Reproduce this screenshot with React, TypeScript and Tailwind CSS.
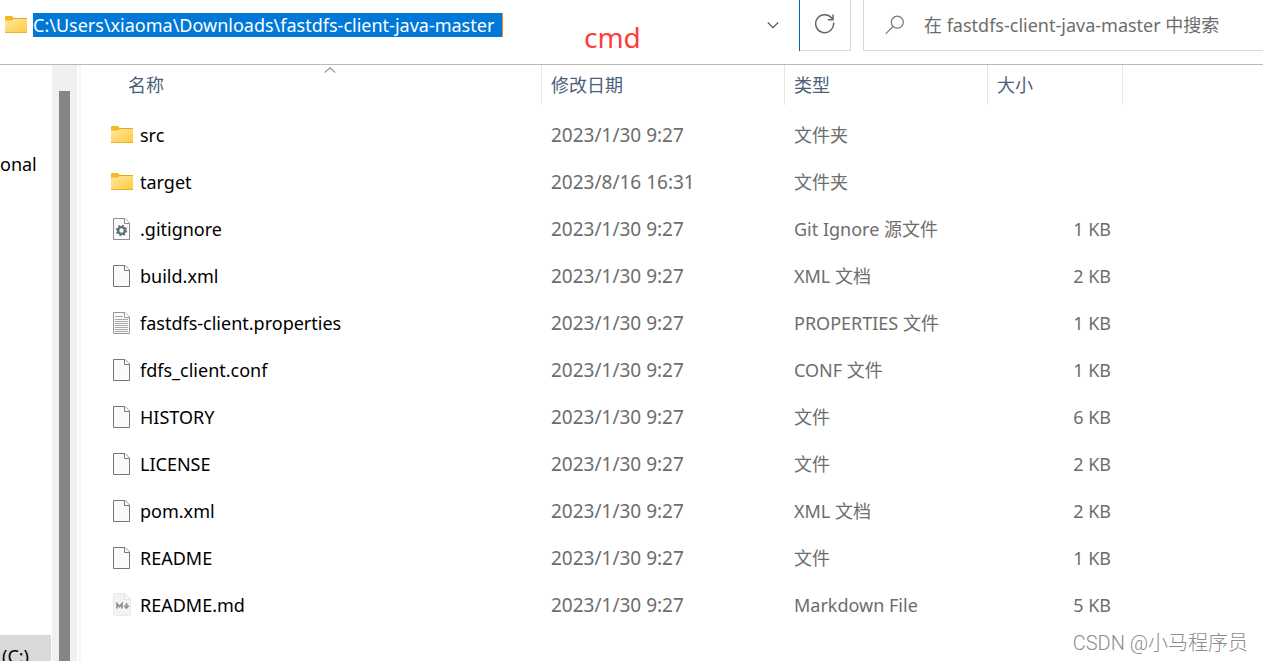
import { ReactNode } from 'react';

type IconKind = 'folder' | 'gear' | 'blank' | 'text' | 'markdown';

interface FileEntry {
    name: string;
    modified: string;
    type: string;
    size?: string;
    icon: IconKind;
}

const files: FileEntry[] = [
    { name: 'src', modified: '2023/1/30 9:27', type: '文件夹', icon: 'folder' },
    { name: 'target', modified: '2023/8/16 16:31', type: '文件夹', icon: 'folder' },
    { name: '.gitignore', modified: '2023/1/30 9:27', type: 'Git Ignore 源文件', size: '1 KB', icon: 'gear' },
    { name: 'build.xml', modified: '2023/1/30 9:27', type: 'XML 文档', size: '2 KB', icon: 'blank' },
    { name: 'fastdfs-client.properties', modified: '2023/1/30 9:27', type: 'PROPERTIES 文件', size: '1 KB', icon: 'text' },
    { name: 'fdfs_client.conf', modified: '2023/1/30 9:27', type: 'CONF 文件', size: '1 KB', icon: 'blank' },
    { name: 'HISTORY', modified: '2023/1/30 9:27', type: '文件', size: '6 KB', icon: 'blank' },
    { name: 'LICENSE', modified: '2023/1/30 9:27', type: '文件', size: '2 KB', icon: 'blank' },
    { name: 'pom.xml', modified: '2023/1/30 9:27', type: 'XML 文档', size: '2 KB', icon: 'blank' },
    { name: 'README', modified: '2023/1/30 9:27', type: '文件', size: '1 KB', icon: 'blank' },
    { name: 'README.md', modified: '2023/1/30 9:27', type: 'Markdown File', size: '5 KB', icon: 'markdown' },
];

function FolderIcon() {
    return (
        <svg className="h-[17px] w-[22px] shrink-0" viewBox="0 0 22 17" aria-hidden="true">
            <defs>
                <linearGradient id="folder-front" x1="0" y1="0" x2="1" y2="1">
                    <stop offset="0" stopColor="#ffe7a2" />
                    <stop offset="1" stopColor="#ffcb3d" />
                </linearGradient>
            </defs>
            <path d="M0 1.2Q0 0 1.2 0H6.4Q7.2 0 7.8 .8L8.6 2H21Q22 2 22 3V6H0Z" fill="#f8b71c" />
            <path d="M0 4.4H7L8.6 3H22V16Q22 17 21 17H1Q0 17 0 16Z" fill="url(#folder-front)" />
            <path d="M0 16.5H22" stroke="#eeb027" />
            <path d="M8.4 2.5H22" stroke="#e8a81e" />
        </svg>
    );
}

function Page({ stroke = '#767676', children }: { stroke?: string; children?: ReactNode }) {
    return (
        <svg className="h-[22px] w-[17px] shrink-0" viewBox="0 0 17 22" fill="none" aria-hidden="true">
            <path d="M.5 .5H12L16.5 5V21.5H.5Z" fill="#fafafa" stroke={stroke} />
            <path d="M11.5 .5V5.5H16.5" fill="#fff" stroke={stroke} />
            {children}
        </svg>
    );
}

function MarkdownIcon() {
    return (
        <svg className="h-[23px] w-[18px] shrink-0" viewBox="0 0 18 23" fill="none" aria-hidden="true">
            <path d="M1.5 .5H11.5L17.5 6.5V21Q17.5 22.5 16 22.5H1.5Q.5 22.5 .5 21V2Q.5 .5 1.5 .5Z" fill="#f3f3f3" stroke="#e9e9e9" />
            <path d="M11.5 .5V6.5H17.5Z" fill="#fafafa" stroke="#e3e3e3" />
            <path d="M4 15.5V10.8L6.5 13.6L9 10.8V15.5M13.5 10V14.5M11.3 12.7L13.5 15L15.7 12.7" stroke="#8e8e8e" strokeWidth="1.7" />
        </svg>
    );
}

function FileIcon({ kind }: { kind: IconKind }) {
    switch (kind) {
        case 'folder':
            return <FolderIcon />;
        case 'gear':
            return (
                <Page stroke="#8b8b8b">
                    <circle cx="8.5" cy="12.5" r="3.4" stroke="#5b6f7b" strokeWidth="2.4" />
                    <circle cx="8.5" cy="12.5" r="5" stroke="#5b6f7b" strokeWidth="1.4" strokeDasharray="1.96 1.96" />
                </Page>
            );
        case 'text':
            return (
                <Page stroke="#979797">
                    <path d="M2 4.5H10M2 7.5H15M2 9.5H15M2 11.5H15M2 13.5H15M2 15.5H15M2 17.5H15M2 19.5H15" stroke="#a8a8a8" />
                </Page>
            );
        case 'markdown':
            return <MarkdownIcon />;
        default:
            return <Page />;
    }
}

function AddressBar() {
    return (
        <header className="relative flex h-[65px] shrink-0 items-start border-b border-[#b9b9b9]">
            <div className="flex h-[51px] min-w-0 flex-1 items-center border-r border-[#0067b8] pb-0.5 pl-[5px]">
                <FolderIcon />
                <input
                    type="text"
                    aria-label="地址"
                    defaultValue="C:\Users\xiaoma\Downloads\fastdfs-client-java-master"
                    className="ml-1.5 h-6 w-[470px] border-r border-[#ff8728] bg-[#0078d7] text-[18px] leading-6 text-white outline-none"
                />
                <button type="button" aria-label="以前的位置" className="mr-5 ml-auto">
                    <svg className="h-3 w-3" viewBox="0 0 12 12" fill="none" stroke="#555" strokeWidth="1.2">
                        <path d="M.8 3.5L6 8.7L11.2 3.5" />
                    </svg>
                </button>
            </div>
            <button
                type="button"
                aria-label="刷新"
                className="flex h-[51px] w-[51px] shrink-0 items-center justify-center border-r border-b border-[#d9d9d9] pb-0.5"
            >
                <svg className="h-5 w-5" viewBox="0 0 20 20" fill="none" stroke="#666" strokeWidth="1.5">
                    <path d="M18.6 8.5A9 9 0 1 1 16.5 3.8L18 5.6M18 .5V5.7H12.8" />
                </svg>
            </button>
            <label className="ml-3 flex h-[51px] w-[400px] shrink-0 items-center border-b border-l border-[#d9d9d9] pl-[21px]">
                <svg className="h-5 w-5 shrink-0" viewBox="0 0 20 20" fill="none" stroke="#777" strokeWidth="1.2">
                    <circle cx="12.3" cy="7.2" r="6" />
                    <path d="M8 11.5L.7 18.8" />
                </svg>
                <input
                    type="search"
                    aria-label="搜索"
                    placeholder="在 fastdfs-client-java-master 中搜索"
                    className="ml-[19px] w-full min-w-0 text-[18px] outline-none placeholder:text-[#6d6d6d]"
                />
            </label>
            <span className="absolute top-[17px] left-[584px] text-[28px] leading-10 text-[#ff3b3b]">cmd</span>
        </header>
    );
}

function Sidebar() {
    return (
        <nav aria-label="导航窗格" className="flex w-[52px] shrink-0 flex-col overflow-hidden pt-[76px] text-[18px] text-black">
            <a href="#onedrive" className="h-[47px] shrink-0 leading-[47px]">
                onal
            </a>
            <a href="#c" className="mt-[447px] mr-px h-[42px] shrink-0 bg-[#d9d9d9] pl-0.5 leading-[42px]">
                (C:)
            </a>
        </nav>
    );
}

function FileTable() {
    return (
        <table className="w-full table-fixed border-separate border-spacing-0 text-[18px] text-[#6d6d6d]">
            <colgroup>
                <col className="w-[461px]" />
                <col className="w-[243px]" />
                <col className="w-[203px]" />
                <col className="w-[135px]" />
                <col />
            </colgroup>
            <thead>
                <tr className="h-10 text-left text-[#4c607a]">
                    <th scope="col" className="relative border-r border-[#e5e5e5] p-0 pl-[47px] font-normal">
                        <svg className="absolute top-0.5 right-0 left-[37px] mx-auto h-1.5 w-3" viewBox="0 0 12 6" fill="none" stroke="#555">
                            <path d="M.7 5.6L6 .7L11.3 5.6" />
                        </svg>
                        名称
                    </th>
                    <th scope="col" className="border-r border-[#e5e5e5] p-0 pl-[9px] font-normal">修改日期</th>
                    <th scope="col" className="border-r border-[#e5e5e5] p-0 pl-[9px] font-normal">类型</th>
                    <th scope="col" className="border-r border-[#e5e5e5] p-0 pl-[9px] font-normal">大小</th>
                    <td />
                </tr>
            </thead>
            <tbody>
                <tr className="h-[7px]" aria-hidden="true">
                    <td colSpan={5} className="p-0" />
                </tr>
                {files.map((file) => (
                    <tr key={file.name} className="h-[47px]">
                        <td className="p-0 pl-[30px] text-black">
                            <div className="flex items-center gap-[7px]">
                                <span className={file.icon === 'folder' ? 'w-[22px] pb-0.5' : 'w-[22px] pb-0.5 pl-0.5'}>
                                    <FileIcon kind={file.icon} />
                                </span>
                                {file.name}
                            </div>
                        </td>
                        <td className="p-0 pl-[9px] text-[19px]">{file.modified}</td>
                        <td className="p-0 pl-[9px]">{file.type}</td>
                        <td className="p-0 pr-3 text-right">{file.size}</td>
                        <td />
                    </tr>
                ))}
            </tbody>
        </table>
    );
}

export default function App() {
    return (
        <div className="relative flex h-screen flex-col overflow-hidden bg-white font-['Noto_Sans','Noto_Sans_CJK_SC',sans-serif]">
            <AddressBar />
            <div className="flex min-h-0 flex-1">
                <Sidebar />
                {/* scrollbar of the navigation pane */}
                <div className="flex w-[25px] shrink-0 justify-center bg-[#f0f0f0] pt-[26px]">
                    <div className="w-[11px] bg-[#858585]" />
                </div>
                <div className="ml-0.5 w-0.5 shrink-0 bg-[#f5f5f5]" />
                <main className="min-w-0 flex-1 overflow-hidden">
                    <FileTable />
                </main>
            </div>
            <span className="absolute right-[15px] bottom-1 font-['Roboto','Noto_Sans_CJK_SC',sans-serif] text-[20px] leading-7 font-light text-[#8c8c8c]">
                CSDN @小马程序员
            </span>
        </div>
    );
}
